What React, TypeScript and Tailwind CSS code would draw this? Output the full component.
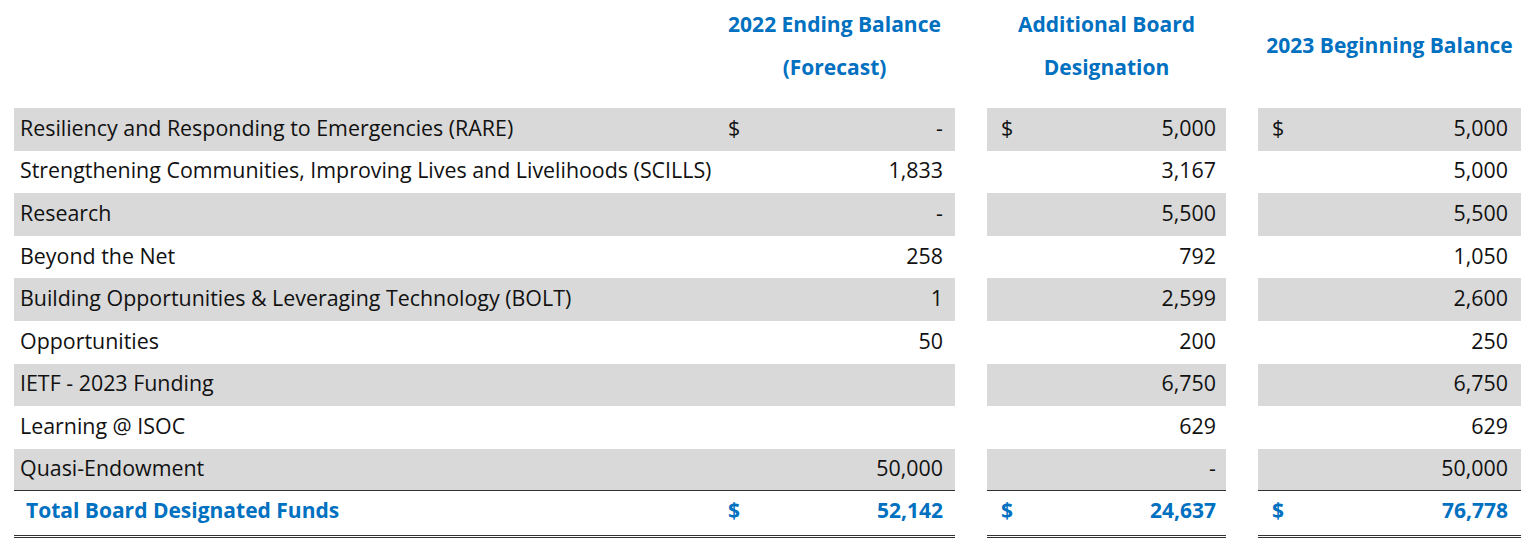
const rows: { label: string; a: string; b: string; c: string; dollar?: boolean }[] = [
  { label: "Resiliency and Responding to Emergencies (RARE)", a: "-", b: "5,000", c: "5,000", dollar: true },
  { label: "Strengthening Communities, Improving Lives and Livelihoods (SCILLS)", a: "1,833", b: "3,167", c: "5,000" },
  { label: "Research", a: "-", b: "5,500", c: "5,500" },
  { label: "Beyond the Net", a: "258", b: "792", c: "1,050" },
  { label: "Building Opportunities & Leveraging Technology (BOLT)", a: "1", b: "2,599", c: "2,600" },
  { label: "Opportunities", a: "50", b: "200", c: "250" },
  { label: "IETF - 2023 Funding", a: "", b: "6,750", c: "6,750" },
  { label: "Learning @ ISOC", a: "", b: "629", c: "629" },
  { label: "Quasi-Endowment", a: "50,000", b: "-", c: "50,000" },
];

function Cell({ dollar, value, w, pr }: { dollar?: boolean; value: string; w: string; pr: string }) {
  return (
    <div className={`flex h-full items-center justify-between pl-[14px] ${w} ${pr}`}>
      <span>{dollar ? "$" : ""}</span>
      <span>{value}</span>
    </div>
  );
}

export default function App() {
  return (
    <div
      className="w-[1536px] h-[549px] bg-white text-[21.4px] text-[#111]"
      style={{ fontFamily: '"Open Sans", "Noto Sans", sans-serif' }}
    >
      <div className="pl-[14px]">
        {/* Header */}
        <div className="flex h-[108px] font-bold text-[#0070c0] text-[21px]">
          <div className="w-[700px]" />
          <div className="w-[241px] flex flex-col items-center pt-[3px] leading-[43px]">
            <span>2022 Ending Balance</span>
            <span>(Forecast)</span>
          </div>
          <div className="w-[32px]" />
          <div className="w-[239px] flex flex-col items-center pt-[3px] leading-[43px]">
            <span>Additional Board</span>
            <span>Designation</span>
          </div>
          <div className="w-[32px]" />
          <div className="w-[263px] flex items-center justify-center pb-[16px]">
            <span>2023 Beginning Balance</span>
          </div>
        </div>

        {/* Rows */}
        {rows.map((r, i) => {
          const last = i === rows.length - 1;
          const bg = i % 2 === 0 ? "bg-[#d9d9d9]" : "";
          const line = last ? "border-b border-[#333]" : "";
          return (
            <div key={r.label} className="flex h-[42.6px]">
              <div className={`flex w-[941px] pb-[3px] ${bg} ${line}`}>
                <div className="flex-1 flex items-center pl-[6px]">{r.label}</div>
                <Cell dollar={r.dollar} value={r.a} w="w-[241px]" pr="pr-[12px]" />
              </div>
              <div className="w-[32px]" />
              <div className={`pb-[3px] ${bg} ${line}`}>
                <Cell dollar={r.dollar} value={r.b} w="w-[239px]" pr="pr-[10px]" />
              </div>
              <div className="w-[32px]" />
              <div className={`pb-[3px] ${bg} ${line}`}>
                <Cell dollar={r.dollar} value={r.c} w="w-[263px]" pr="pr-[13px]" />
              </div>
            </div>
          );
        })}

        {/* Total */}
        <div className="flex h-[47px] font-bold text-[21px] text-[#0070c0]">
          <div className="flex w-[941px] border-b-[3px] border-double border-[#333]">
            <div className="flex-1 flex items-center pl-[12px] pb-[6px]">Total Board Designated Funds</div>
            <Cell dollar value="52,142" w="w-[241px] pb-[6px]" pr="pr-[12px]" />
          </div>
          <div className="w-[32px]" />
          <div className="border-b-[3px] border-double border-[#333]">
            <Cell dollar value="24,637" w="w-[239px] pb-[6px]" pr="pr-[10px]" />
          </div>
          <div className="w-[32px]" />
          <div className="border-b-[3px] border-double border-[#333]">
            <Cell dollar value="76,778" w="w-[263px] pb-[6px]" pr="pr-[13px]" />
          </div>
        </div>
      </div>
    </div>
  );
}
